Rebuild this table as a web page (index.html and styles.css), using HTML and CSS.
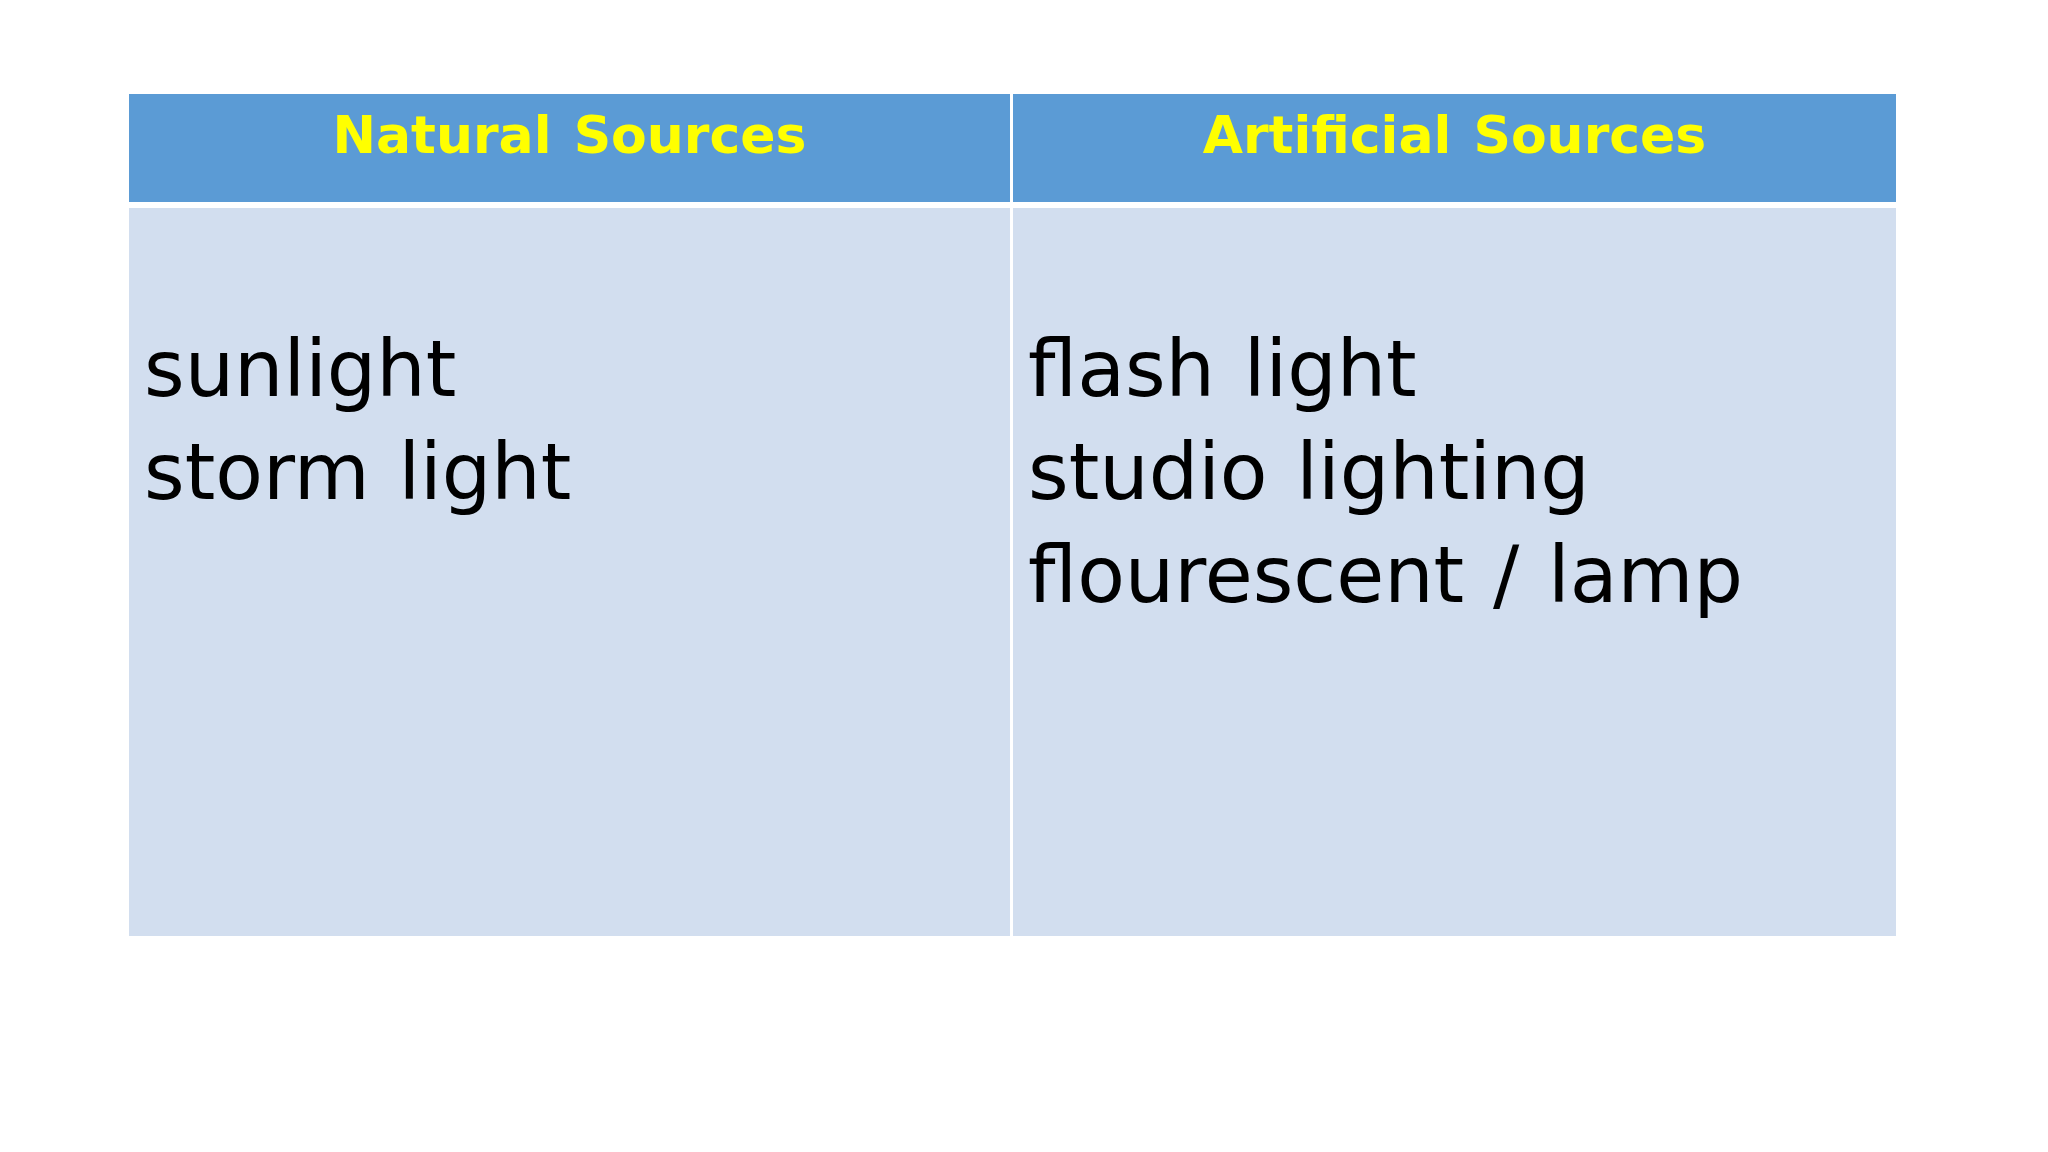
FILE: index.html
```html
<!DOCTYPE html>
<html lang="en">
<head>
<meta charset="utf-8">
<title>Light Sources</title>
<link rel="stylesheet" href="styles.css">
</head>
<body>
<main class="slide">
  <div class="table">
    <div class="head">Natural Sources</div>
    <div class="head">Artificial Sources</div>
    <div class="cell">
      <div class="line">sunlight</div>
      <div class="line">storm light</div>
    </div>
    <div class="cell">
      <div class="line">flash light</div>
      <div class="line">studio lighting</div>
      <div class="line">flourescent / lamp</div>
    </div>
  </div>
</main>
</body>
</html>
```

FILE: styles.css
```css
html, body {
  margin: 0;
  padding: 0;
  background: #ffffff;
}

.slide {
  width: 2048px;
  height: 1152px;
  padding: 94px 0 0 129px;
  box-sizing: border-box;
  font-family: "Comic Sans MS", "DejaVu Sans", sans-serif;
}

.table {
  display: grid;
  grid-template-columns: 881px 883px;
  grid-template-rows: 108px 728px;
  column-gap: 3px;
  row-gap: 6px;
  width: 1767px;
}

.head {
  background: #5b9bd5;
  color: #ffff00;
  font-weight: bold;
  font-size: 52px;
  line-height: 1;
  word-spacing: 4px;
  text-align: center;
  padding-top: 15px;
  box-sizing: border-box;
}

.cell {
  background: #d2deef;
  color: #000000;
  font-size: 78px;
  line-height: 103px;
  word-spacing: 4px;
  padding: 110px 0 0 15px;
  box-sizing: border-box;
}

.line {
  white-space: nowrap;
}
```
